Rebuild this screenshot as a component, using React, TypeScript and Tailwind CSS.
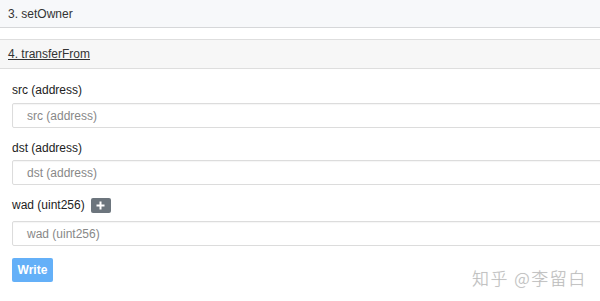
import React from 'react';

const font = { fontFamily: '"Liberation Sans", Arial, sans-serif' };

function Field({ label, extra, gap }: { label: string; extra?: boolean; gap: string }) {
  return (
    <div>
      <div className={`flex items-center h-[14px] ${gap} text-[12px] leading-[14px] text-[#222]`}>
        <span>{label}</span>
        {extra && (
          <button className="ml-[6px] w-[20px] h-[15px] rounded-[2px] bg-[#6c757d] flex items-center justify-center">
            <svg width="9" height="9" viewBox="0 0 9 9">
              <path d="M4.5 0.5v8M0.5 4.5h8" stroke="#fff" strokeWidth="2" />
            </svg>
          </button>
        )}
      </div>
      <div className="w-[620px] h-[25px] border border-[#dcdcdc] rounded-[2px] pl-[14px] flex items-center text-[12px] text-[#888] bg-white shadow-[inset_0_1px_1px_rgba(0,0,0,0.04)]">
        {label}
      </div>
    </div>
  );
}

export default function App() {
  return (
    <div className="relative w-[600px] h-[301px] overflow-hidden bg-white" style={font}>
      <div className="h-[28px] bg-[#f7f8fa] border-b border-[#d6d7d9] pl-[8px] flex items-center text-[12px] text-[#333]">
        3. setOwner
      </div>
      <div className="h-[11px]" />
      <div className="h-[30px] bg-[#f7f7f7] border-y border-[#dedede] pl-[8px] flex items-center text-[12px] text-[#333]">
        <span className="underline">4. transferFrom</span>
      </div>

      <div className="pl-[12px] pt-[14px]">
        <Field label="src (address)" gap="mb-[6px]" />
        <div className="h-[13px]" />
        <Field label="dst (address)" gap="mb-[5px]" />
        <div className="h-[13px]" />
        <Field label="wad (uint256)" extra gap="mb-[9px]" />
        <div className="h-[12px]" />
        <button className="w-[41px] h-[24px] rounded-[2px] bg-[#64b0f8] text-white text-[12px] font-bold flex items-center justify-center">
          Write
        </button>
      </div>

      <div
        className="absolute left-[472px] top-[267px] text-[17px] leading-[22px] text-[#bdbdbd] tracking-[1.5px] font-light"
        style={{ fontFamily: '"Noto Sans CJK SC", sans-serif', textShadow: '0 0 1px rgba(0,0,0,0.12)' }}
      >
        知乎 @李留白
      </div>
    </div>
  );
}
